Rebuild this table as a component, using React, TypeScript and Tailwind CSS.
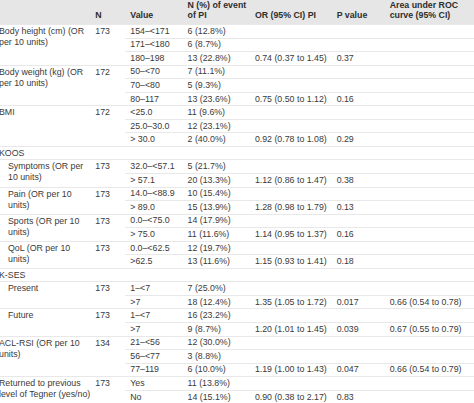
import React from 'react'

type Row = {
  label?: React.ReactNode
  indent?: boolean
  span?: number
  n?: string
  value?: string
  pct?: string
  or?: string
  p?: string
  auc?: string
  section?: boolean
}

const rows: Row[] = [
  { label: <>Body height (cm) (OR<br />per 10 units)</>, span: 3, n: '173', value: '154–<171', pct: '6 (12.8%)' },
  { value: '171–<180', pct: '6 (8.7%)' },
  { value: '180–198', pct: '13 (22.8%)', or: '0.74 (0.37 to 1.45)', p: '0.37' },
  { label: <>Body weight (kg) (OR<br />per 10 units)</>, span: 3, n: '172', value: '50–<70', pct: '7 (11.1%)' },
  { value: '70–<80', pct: '5 (9.3%)' },
  { value: '80–117', pct: '13 (23.6%)', or: '0.75 (0.50 to 1.12)', p: '0.16' },
  { label: 'BMI', span: 3, n: '172', value: '<25.0', pct: '11 (9.6%)' },
  { value: '25.0–30.0', pct: '12 (23.1%)' },
  { value: '> 30.0', pct: '2 (40.0%)', or: '0.92 (0.78 to 1.08)', p: '0.29' },
  { label: 'KOOS', section: true },
  { label: <>Symptoms (OR per<br />10 units)</>, indent: true, span: 2, n: '173', value: '32.0–<57.1', pct: '5 (21.7%)' },
  { value: '> 57.1', pct: '20 (13.3%)', or: '1.12 (0.86 to 1.47)', p: '0.38' },
  { label: <>Pain (OR per 10<br />units)</>, indent: true, span: 2, n: '173', value: '14.0–<88.9', pct: '10 (15.4%)' },
  { value: '> 89.0', pct: '15 (13.9%)', or: '1.28 (0.98 to 1.79)', p: '0.13' },
  { label: <>Sports (OR per 10<br />units)</>, indent: true, span: 2, n: '173', value: '0.0–<75.0', pct: '14 (17.9%)' },
  { value: '> 75.0', pct: '11 (11.6%)', or: '1.14 (0.95 to 1.37)', p: '0.16' },
  { label: <>QoL (OR per 10<br />units)</>, indent: true, span: 2, n: '173', value: '0.0–<62.5', pct: '12 (19.7%)' },
  { value: '>62.5', pct: '13 (11.6%)', or: '1.15 (0.93 to 1.41)', p: '0.18' },
  { label: 'K-SES', section: true },
  { label: 'Present', indent: true, span: 2, n: '173', value: '1–<7', pct: '7 (25.0%)' },
  { value: '>7', pct: '18 (12.4%)', or: '1.35 (1.05 to 1.72)', p: '0.017', auc: '0.66 (0.54 to 0.78)' },
  { label: 'Future', indent: true, span: 2, n: '173', value: '1–<7', pct: '16 (23.2%)' },
  { value: '>7', pct: '9 (8.7%)', or: '1.20 (1.01 to 1.45)', p: '0.039', auc: '0.67 (0.55 to 0.79)' },
  { label: <>ACL-RSI (OR per 10<br />units)</>, span: 3, n: '134', value: '21–<56', pct: '12 (30.0%)' },
  { value: '56–<77', pct: '3 (8.8%)' },
  { value: '77–119', pct: '6 (10.0%)', or: '1.19 (1.00 to 1.43)', p: '0.047', auc: '0.66 (0.54 to 0.79)' },
  { label: <>Returned to previous<br />level of Tegner (yes/no)</>, span: 2, n: '173', value: 'Yes', pct: '11 (13.8%)' },
  { value: 'No', pct: '14 (15.1%)', or: '0.90 (0.38 to 2.17)', p: '0.83' },
]

const line = 'border-t border-[#e8e8e8]'
const cell = line + ' pl-[5px] align-middle whitespace-nowrap overflow-hidden'

export default function App() {
  return (
    <div
      className="w-[474px] h-[403px] overflow-hidden bg-white text-[#3a3a3a]"
      style={{ fontFamily: '"Liberation Sans", Arial, sans-serif' }}
    >
      <table className="table-fixed border-collapse ml-[-1px] text-[8.8px]">
        <colgroup>
          <col className="w-[89px]" />
          <col className="w-[42px]" />
          <col className="w-[61px]" />
          <col className="w-[69px]" />
          <col className="w-[84px]" />
          <col className="w-[61px]" />
          <col className="w-[95px]" />
        </colgroup>
        <thead>
          <tr className="h-[24px] bg-[#e6e6e6] font-bold leading-[10px] text-[#2e2e2e]">
            <th className="text-left align-bottom pb-[4px]"></th>
            <th className="text-left align-bottom pb-[4px] pl-[5px]">N</th>
            <th className="text-left align-bottom pb-[4px] pl-[5px]">Value</th>
            <th className="text-left align-bottom pb-[4px] pl-[5px] whitespace-nowrap">
              N (%) of event<br />of PI
            </th>
            <th className="text-left align-bottom pb-[4px] pl-[5px] whitespace-nowrap">OR (95% CI) PI</th>
            <th className="text-left align-bottom pb-[4px] pl-[5px] whitespace-nowrap">P value</th>
            <th className="text-left align-bottom pb-[4px] pl-[5px] whitespace-nowrap">
              Area under ROC<br />curve (95% CI)
            </th>
          </tr>
        </thead>
        <tbody>
          {rows.map((r, i) => {
            if (r.section) {
              return (
                <tr key={i} className="h-[13.55px] leading-[11px]">
                  <td colSpan={7} className={line + ' align-middle whitespace-nowrap'}>
                    {r.label}
                  </td>
                </tr>
              )
            }
            return (
              <tr key={i} className="h-[13.55px] leading-[11px]">
                {r.label !== undefined && (
                  <td
                    rowSpan={r.span}
                    className={
                      line + ' align-top pt-[1px] whitespace-nowrap ' + (r.indent ? 'pl-[9px]' : 'pl-0')
                    }
                  >
                    {r.label}
                  </td>
                )}
                {r.n !== undefined && (
                  <td rowSpan={r.span} className={line + ' align-top pt-[1px] pl-[5px]'}>
                    {r.n}
                  </td>
                )}
                <td className={cell}>{r.value}</td>
                <td className={cell}>{r.pct}</td>
                <td className={cell}>{r.or}</td>
                <td className={cell}>{r.p}</td>
                <td className={cell}>{r.auc}</td>
              </tr>
            )
          })}
        </tbody>
      </table>
    </div>
  )
}
